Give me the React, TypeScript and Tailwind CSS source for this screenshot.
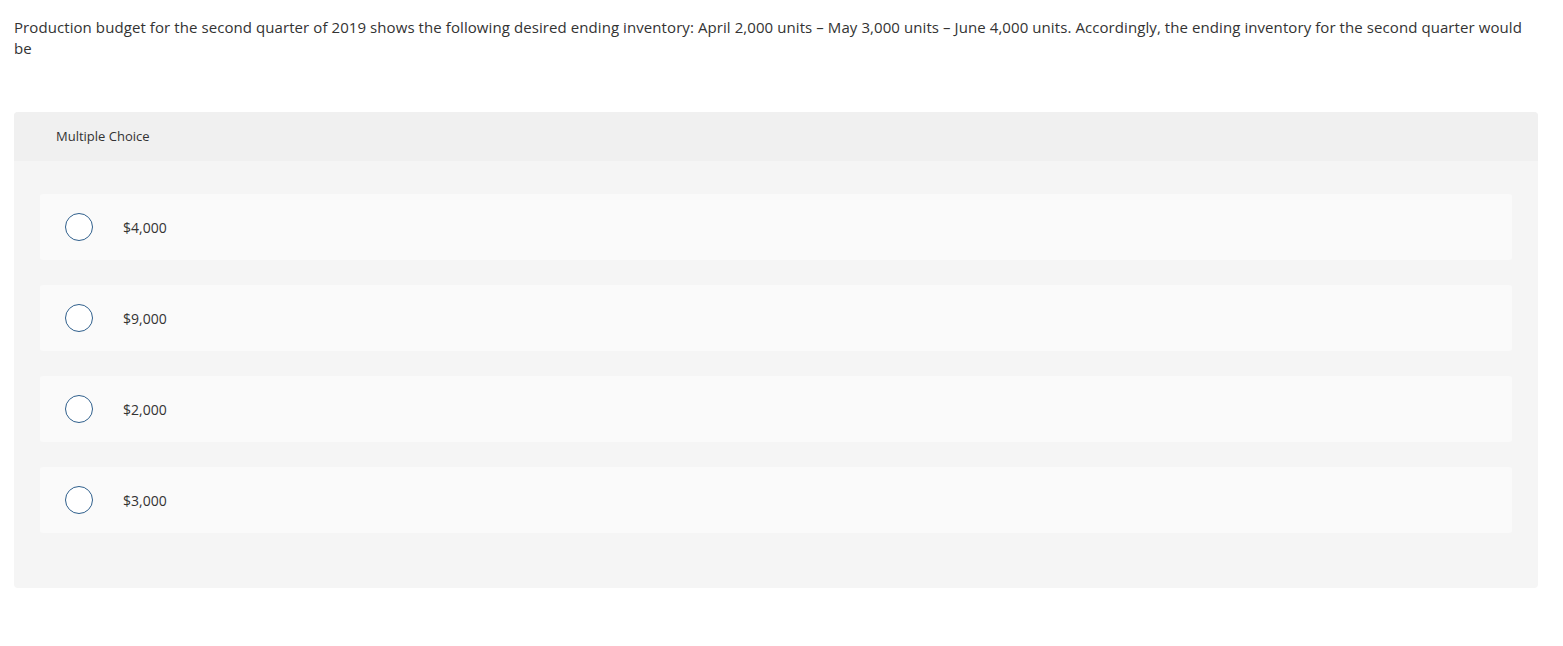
import React from "react";

const options = ["$4,000", "$9,000", "$2,000", "$3,000"];

export default function App() {
  return (
    <div className="min-h-screen bg-white text-[#333] font-['Open_Sans',sans-serif]">
      <div className="px-[14px] pt-[17px]">
        <p className="text-[15px] leading-[21px] tracking-[0.08px] pr-[25px]">
          Production budget for the second quarter of 2019 shows the following desired ending inventory: April 2,000 units – May 3,000 units – June 4,000 units. Accordingly, the ending inventory for the second quarter would be
        </p>
        <div className="mt-[53px] mr-[11px] rounded-[4px] bg-[#f5f5f5] overflow-hidden">
          <div className="h-[49px] bg-[#f0f0f0] flex items-center pl-[42px] text-[13px]">
            Multiple Choice
          </div>
          <div className="px-[26px] pt-[33px] pb-[55px] flex flex-col gap-[25px]">
            {options.map((o) => (
              <div key={o} className="h-[66px] rounded-[3px] bg-[#fafafa] flex items-center">
                <span className="ml-[25px] w-[28px] h-[28px] rounded-full border-[1.5px] border-[#2f5f8c] bg-white" />
                <span className="ml-[30px] text-[14px]">{o}</span>
              </div>
            ))}
          </div>
        </div>
      </div>
    </div>
  );
}
